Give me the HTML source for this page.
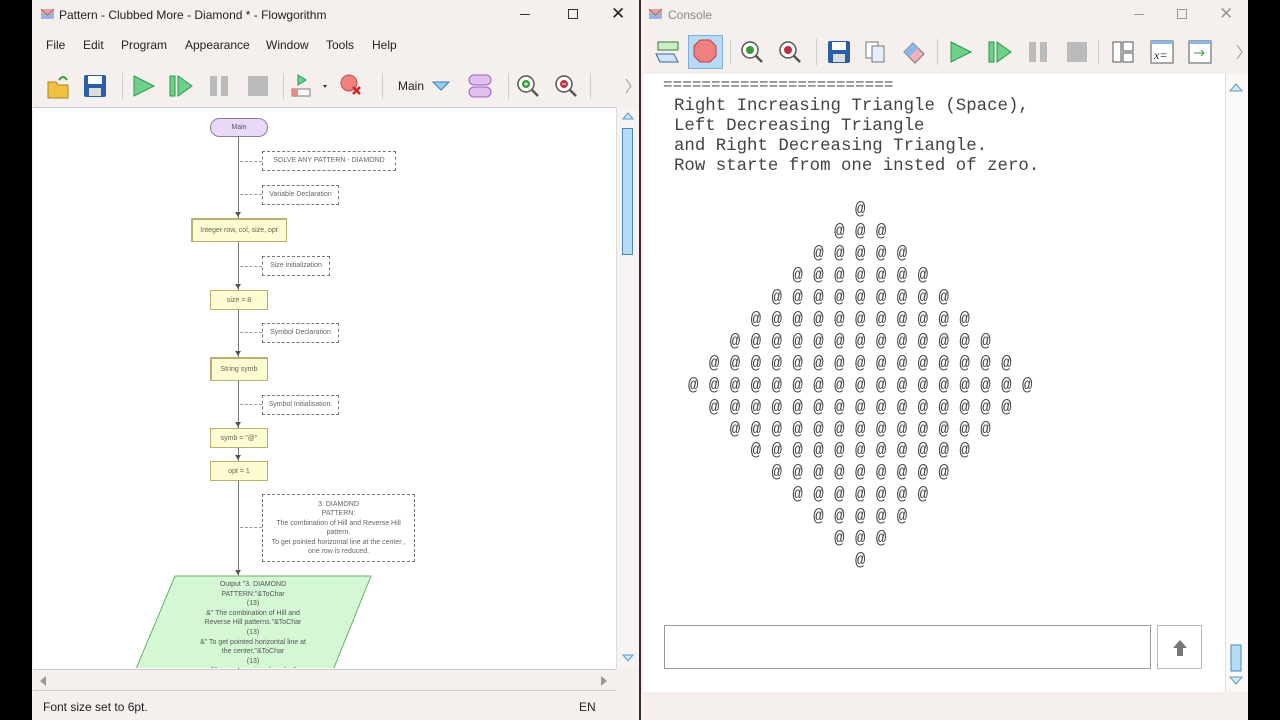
<!DOCTYPE html>
<html><head><meta charset="utf-8"><style>
*{margin:0;padding:0;box-sizing:border-box}
body{width:1280px;height:720px;background:#000;position:relative;overflow:hidden;font-family:"Liberation Sans",sans-serif}
.a{position:absolute}
.win{background:#f5efee}
.t{font-size:12px;color:#222}
.menu span{position:absolute;top:38px;font-size:12px;color:#222}
.c{position:absolute;border:1px dashed #777;font-size:7px;color:#666;display:flex;align-items:center;justify-content:center;text-align:center;line-height:9.5px;background:#fff}
.dl{position:absolute;left:240px;width:22px;border-top:1px dashed #999}
.p{position:absolute;background:#fdfbd2;border:1px solid #b8b070;font-size:7px;color:#665;display:flex;align-items:center;justify-content:center}
.arr{position:absolute;left:235px;width:0;height:0;border-left:3.5px solid transparent;border-right:3.5px solid transparent;border-top:5px solid #555}
.sep{position:absolute;width:1px;height:26px;background:#ccc}
.mono{font-family:"Liberation Mono",monospace;font-size:17.4px;color:#444;white-space:pre;position:absolute}
</style></head><body>

<!-- LEFT WINDOW -->
<div class="a win" style="left:32px;top:0;width:607px;height:720px"></div>
<div class="a" style="left:639px;top:0;width:2px;height:720px;background:#3a2a2e"></div>
<svg class="a" style="left:40px;top:7px" width="15" height="15"><rect x="1" y="2" width="13" height="5" fill="#e9a0a0"/><rect x="1" y="7" width="13" height="5" fill="#9ab6e0"/><path d="M1 2 L7.5 8 L14 2" stroke="#777" fill="none"/></svg>
<div class="a t" style="left:59px;top:8px">Pattern - Clubbed More - Diamond * - Flowgorithm</div>
<div class="a" style="left:520px;top:14px;width:10px;border-top:1px solid #333"></div>
<div class="a" style="left:568px;top:9px;width:10px;height:10px;border:1px solid #333"></div>
<div class="a t" style="left:611px;top:4px;font-size:17px;font-weight:300">✕</div>
<div class="menu">
<span style="left:46px">File</span><span style="left:83px">Edit</span><span style="left:121px">Program</span><span style="left:185px">Appearance</span><span style="left:266px">Window</span><span style="left:326px">Tools</span><span style="left:372px">Help</span>
</div>
<!-- toolbar left -->
<svg class="a" style="left:46px;top:72px" width="600" height="28">
<path d="M2 10 h8 l2 3 h10 v13 h-20z" fill="#f0c040" stroke="#b08020"/><path d="M13 8 q4 -6 8 0" stroke="#3a9a3a" stroke-width="2" fill="none"/>
<rect x="38" y="3" width="22" height="22" fill="#2a5ea8" rx="2"/><rect x="42" y="4" width="14" height="8" fill="#fff"/><rect x="43" y="16" width="12" height="8" fill="#ddd"/>
<path d="M88 4 L108 14 L88 24z" fill="#6fd08a" stroke="#2a9a4a"/>
<rect x="124" y="4" width="5" height="20" fill="#6fd08a" stroke="#2a9a4a"/><path d="M132 4 L146 14 L132 24z" fill="#6fd08a" stroke="#2a9a4a"/>
<rect x="164" y="4" width="7" height="20" fill="#bbb"/><rect x="175" y="4" width="7" height="20" fill="#bbb"/>
<rect x="202" y="4" width="20" height="20" fill="#bbb"/>
<path d="M252 3 L260 8 L252 13z" fill="#6fd08a" stroke="#2a9a4a"/><rect x="246" y="17" width="18" height="7" fill="#fff" stroke="#777"/><rect x="246" y="17" width="6" height="7" fill="#e88"/><path d="M277 13 l4 0 l-2 3z" fill="#333"/>
<circle cx="303" cy="11" r="8" fill="#f08080" stroke="#c05050"/><path d="M307 15 l7 7 M314 15 l-7 7" stroke="#d02020" stroke-width="2.5"/>
<text x="352" y="18" font-size="12" fill="#222" font-family="Liberation Sans">Main</text>
<path d="M387 10 h16 l-8 8z" fill="#8fd0f0" stroke="#3a80b0"/>
<rect x="423" y="3" width="22" height="10" rx="5" fill="#e0c0f0" stroke="#9a60c0"/><rect x="423" y="15" width="22" height="10" rx="5" fill="#e0c0f0" stroke="#9a60c0"/>
<circle cx="480" cy="12" r="8" fill="#fff" stroke="#555" stroke-width="1.5"/><path d="M486 18 l6 6" stroke="#555" stroke-width="2.5"/><circle cx="480" cy="12" r="4" fill="#3a9a3a"/><path d="M478 12 h4 M480 10 v4" stroke="#fff"/>
<circle cx="518" cy="12" r="8" fill="#fff" stroke="#555" stroke-width="1.5"/><path d="M524 18 l6 6" stroke="#555" stroke-width="2.5"/><circle cx="518" cy="12" r="4" fill="#c03040"/><path d="M516 12 h4" stroke="#fff"/>
<path d="M580 7 l5 7 l-5 7" stroke="#999" fill="none"/>
</svg>
<div class="sep" style="left:122px;top:73px"></div><div class="sep" style="left:283px;top:73px"></div><div class="sep" style="left:382px;top:73px"></div><div class="sep" style="left:508px;top:73px"></div><div class="sep" style="left:590px;top:73px"></div>
<!-- canvas -->
<div class="a" style="left:33px;top:107px;width:583px;height:562px;background:#fff;border-top:1px solid #ccc"></div>
<div class="a" style="left:616px;top:107px;width:23px;height:562px;background:#f7f3f3;border-left:1px solid #ddd"></div>
<div class="a" style="left:622px;top:128px;width:11px;height:127px;background:#b6dcf8;border:1px solid #4a88b8"></div>
<svg class="a" style="left:620px;top:110px" width="16" height="556"><path d="M3 9 l5 -6 l5 6z" fill="#cfe8fa" stroke="#5a9ac8"/><path d="M3 545 l5 6 l5 -6z" fill="#cfe8fa" stroke="#5a9ac8"/></svg>
<div class="a" style="left:33px;top:669px;width:583px;height:22px;background:#f5efee;border-top:1px solid #ccc;border-bottom:1px solid #ccc"></div>
<div class="a" style="left:40px;top:676px;border-top:5px solid transparent;border-bottom:5px solid transparent;border-right:6px solid #999"></div>
<div class="a" style="left:601px;top:676px;border-top:5px solid transparent;border-bottom:5px solid transparent;border-left:6px solid #999"></div>
<div class="a t" style="left:43px;top:700px">Font size set to 6pt.</div>
<div class="a t" style="left:579px;top:700px">EN</div>

<!-- flowchart -->
<div class="a" style="left:238px;top:137px;width:1px;height:532px;background:#777"></div>
<div class="a" style="left:210px;top:118px;width:58px;height:19px;border-radius:10px;background:#ead8f7;border:1px solid #8a7aa0;font-size:7px;color:#555;display:flex;align-items:center;justify-content:center">Main</div>
<div class="dl" style="top:161px"></div><div class="c" style="left:262px;top:151px;width:134px;height:20px">SOLVE ANY PATTERN - DIAMOND</div>
<div class="dl" style="top:194px"></div><div class="c" style="left:262px;top:185px;width:77px;height:20px">Variable Declaration</div>
<div class="arr" style="top:212px"></div>
<div class="p" style="left:191px;top:218px;width:96px;height:24px;box-shadow:inset 4px 4px 0 -3px #b8b070">Integer row, col, size, opt</div>
<div class="dl" style="top:266px"></div><div class="c" style="left:262px;top:256px;width:68px;height:20px">Size initialization</div>
<div class="arr" style="top:284px"></div>
<div class="p" style="left:210px;top:290px;width:58px;height:20px">size = 8</div>
<div class="dl" style="top:332px"></div><div class="c" style="left:262px;top:323px;width:77px;height:20px">Symbol Declaration</div>
<div class="arr" style="top:351px"></div>
<div class="p" style="left:210px;top:357px;width:58px;height:24px;box-shadow:inset 4px 4px 0 -3px #b8b070">String symb</div>
<div class="dl" style="top:404px"></div><div class="c" style="left:262px;top:395px;width:77px;height:20px">Symbol Initialisation.</div>
<div class="arr" style="top:422px"></div>
<div class="p" style="left:210px;top:428px;width:58px;height:20px">symb = "@"</div>
<div class="arr" style="top:455px"></div>
<div class="p" style="left:210px;top:461px;width:58px;height:20px">opt = 1</div>
<div class="dl" style="top:527px"></div><div class="c" style="left:262px;top:494px;width:153px;height:68px">3. DIAMOND<br>PATTERN:<br>The combination of Hill and Reverse Hill<br>pattern.<br>To get pointed horizontal line at the center ,<br>one row is reduced.</div>
<div class="arr" style="top:570px"></div>
<div class="a" style="left:33px;top:575px;width:583px;height:93px;overflow:hidden">
<svg class="a" style="left:0;top:0" width="583" height="120"><path d="M142 1 L338 1 L290 120 L92 120z" fill="#d4f7d4" stroke="#6ab06a"/></svg>
<div class="a" style="left:140px;top:5px;width:160px;text-align:center;font-size:7px;color:#555;line-height:9.6px">Output "3. DIAMOND<br>PATTERN:"&amp;ToChar<br>(13)<br>&amp;" The combination of Hill and<br>Reverse Hill patterns."&amp;ToChar<br>(13)<br>&amp;" To get pointed horizontal line at<br>the center,"&amp;ToChar<br>(13)<br>&amp;" ... one row is reduced ..."</div>
</div>

<!-- RIGHT WINDOW -->
<div class="a win" style="left:641px;top:0;width:607px;height:720px"></div>
<svg class="a" style="left:648px;top:7px" width="15" height="15"><rect x="1" y="2" width="13" height="5" fill="#e9a0a0"/><rect x="1" y="7" width="13" height="5" fill="#9ab6e0"/><path d="M1 2 L7.5 8 L14 2" stroke="#777" fill="none"/></svg>
<div class="a t" style="left:668px;top:8px;color:#888">Console</div>
<div class="a" style="left:1134px;top:14px;width:10px;border-top:1px solid #999"></div>
<div class="a" style="left:1177px;top:9px;width:10px;height:10px;border:1px solid #999"></div>
<div class="a t" style="left:1219px;top:4px;font-size:17px;color:#999">✕</div>
<div class="a" style="left:688px;top:35px;width:35px;height:34px;background:#b8daf5;border:1px solid #7ab0dc"></div>
<svg class="a" style="left:650px;top:36px" width="600" height="32">
<rect x="8" y="6" width="20" height="8" fill="#c8f0c8" stroke="#3a7a3a"/><path d="M6 18 h18 l4 8 h-18z" fill="#cfe4f8" stroke="#3a6a9a"/>
<path d="M50 4 h10 l6 6 v10 l-6 6 h-10 l-6 -6 v-10z" fill="#f08080" stroke="#c04040"/>
<circle cx="100" cy="14" r="8" fill="#fff" stroke="#555" stroke-width="1.5"/><path d="M106 20 l6 6" stroke="#555" stroke-width="2.5"/><circle cx="100" cy="14" r="4" fill="#3a9a3a"/>
<circle cx="138" cy="14" r="8" fill="#fff" stroke="#555" stroke-width="1.5"/><path d="M144 20 l6 6" stroke="#555" stroke-width="2.5"/><circle cx="138" cy="14" r="4" fill="#c03040"/>
<rect x="178" y="5" width="22" height="22" fill="#2a5ea8" rx="2"/><rect x="182" y="6" width="14" height="8" fill="#fff"/><rect x="183" y="18" width="12" height="8" fill="#ddd"/>
<rect x="216" y="6" width="12" height="16" fill="#fff" stroke="#777"/><rect x="222" y="10" width="12" height="16" fill="#e4eefa" stroke="#777"/>
<path d="M254 16 l9 -9 l11 11 l-9 9z" fill="#f4b0b8" stroke="#777"/><path d="M254 16 l9 -9 l5 5 l-9 9z" fill="#8ab8e8"/>
<path d="M301 6 L321 16 L301 26z" fill="#6fd08a" stroke="#2a9a4a"/>
<rect x="339" y="6" width="5" height="20" fill="#6fd08a" stroke="#2a9a4a"/><path d="M347 6 L361 16 L347 26z" fill="#6fd08a" stroke="#2a9a4a"/>
<rect x="379" y="6" width="7" height="20" fill="#bbb"/><rect x="390" y="6" width="7" height="20" fill="#bbb"/>
<rect x="417" y="6" width="20" height="20" fill="#bbb"/>
<rect x="463" y="6" width="8" height="20" fill="#fff" stroke="#555"/><rect x="473" y="6" width="10" height="9" fill="#fff" stroke="#555"/><rect x="473" y="17" width="10" height="9" fill="#fff" stroke="#555"/>
<rect x="501" y="5" width="22" height="22" fill="#fff" stroke="#555"/><rect x="501" y="5" width="22" height="3" fill="#8ab8e8"/><text x="504" y="23" font-size="12" font-style="italic" font-family="Liberation Serif" fill="#223">x=</text>
<rect x="539" y="5" width="22" height="22" fill="#fff" stroke="#555"/><rect x="539" y="5" width="22" height="3" fill="#8ab8e8"/><path d="M544 17 h10 m-3 -3 l3 3 l-3 3" stroke="#3a9a3a" fill="none"/>
<path d="M587 9 l5 7 l-5 7" stroke="#999" fill="none"/>
</svg>
<div class="sep" style="left:730px;top:39px"></div><div class="sep" style="left:816px;top:39px"></div><div class="sep" style="left:937px;top:39px"></div><div class="sep" style="left:1098px;top:39px"></div>
<div class="a" style="left:643px;top:74px;width:582px;height:618px;background:#fff"></div>
<div class="a" style="left:1225px;top:74px;width:23px;height:618px;background:#fbf8f8;border-left:1px solid #ddd"></div>
<svg class="a" style="left:1228px;top:80px" width="16" height="610"><path d="M2 11 l6 -7 l6 7z" fill="#cfe8fa" stroke="#5a9ac8"/><rect x="3" y="565" width="10" height="26" fill="#b6dcf8" stroke="#4a88b8"/><path d="M2 597 l6 7 l6 -7z" fill="#cfe8fa" stroke="#5a9ac8"/></svg>
<div class="mono" style="left:663px;top:75px;line-height:20px;font-size:16px;color:#555">========================</div>
<div class="mono" style="left:674px;top:97px;line-height:20px">Right Increasing Triangle (Space),
Left Decreasing Triangle
and Right Decreasing Triangle.
Row starte from one insted of zero.</div>
<div class="mono" style="left:688px;top:200px;line-height:21.95px;font-size:17.4px">                @
              @ @ @
            @ @ @ @ @
          @ @ @ @ @ @ @
        @ @ @ @ @ @ @ @ @
      @ @ @ @ @ @ @ @ @ @ @
    @ @ @ @ @ @ @ @ @ @ @ @ @
  @ @ @ @ @ @ @ @ @ @ @ @ @ @ @
@ @ @ @ @ @ @ @ @ @ @ @ @ @ @ @ @
  @ @ @ @ @ @ @ @ @ @ @ @ @ @ @
    @ @ @ @ @ @ @ @ @ @ @ @ @
      @ @ @ @ @ @ @ @ @ @ @
        @ @ @ @ @ @ @ @ @
          @ @ @ @ @ @ @
            @ @ @ @ @
              @ @ @
                @</div>
<div class="a" style="left:664px;top:625px;width:487px;height:44px;border:1px solid #999;background:#fff"></div>
<div class="a" style="left:1157px;top:625px;width:45px;height:44px;border:1px solid #bbb;background:#fff"></div>
<svg class="a" style="left:1170px;top:638px" width="20" height="20"><path d="M10 2 l7 8 h-4 v8 h-6 v-8 h-4z" fill="#777"/></svg>
</body></html>
